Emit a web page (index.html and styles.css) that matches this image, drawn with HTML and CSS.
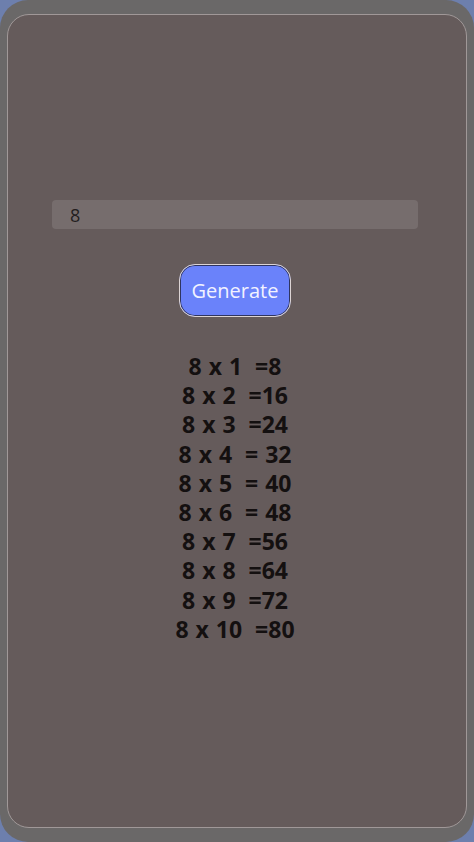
FILE: index.html
```html
<!DOCTYPE html>
<html lang="en">
<head>
  <meta charset="UTF-8">
  <meta name="viewport" content="width=device-width, initial-scale=1.0">
  <title>Multiplication Table</title>
  <link rel="stylesheet" href="styles.css">
</head>
<body>

  <div class="frame">
    <div class="panel">
      <input id="number" class="number-input" type="text" value="8" />
      <button class="generate" onclick="generateTable()">Generate</button>
      <div id="table" class="table">
        <div class="row">8 x 1 <span class="eq">=8</span></div>
        <div class="row">8 x 2 <span class="eq">=16</span></div>
        <div class="row">8 x 3 <span class="eq">=24</span></div>
        <div class="row">8 x 4 <span class="eq">= 32</span></div>
        <div class="row">8 x 5 <span class="eq">= 40</span></div>
        <div class="row">8 x 6 <span class="eq">= 48</span></div>
        <div class="row">8 x 7 <span class="eq">=56</span></div>
        <div class="row">8 x 8 <span class="eq">=64</span></div>
        <div class="row">8 x 9 <span class="eq">=72</span></div>
        <div class="row">8 x 10 <span class="eq">=80</span></div>
      </div>
    </div>
  </div>

  <script>
    function generateTable() {
      let n = parseInt(document.getElementById('number').value);
      if (isNaN(n)) return;
      let html = '';
      for (let i = 1; i <= 10; i++) {
        html += '<div class="row">' + n + ' x ' + i + ' <span class="eq">=' + (n * i) + '</span></div>';
      }
      document.getElementById('table').innerHTML = html;
    }
  </script>
</body>
</html>
```

FILE: styles.css
```css
body {
  font-family: 'Open Sans', sans-serif;
  margin: 0;
  height: 100vh;
  background-color: #6d7fad; /* Blue-gray behind the frame */
}

.frame {
  background-color: #6a6868; /* Gray device frame */
  border-radius: 28px;
  height: 842px;
  padding: 14px 7px;
  box-sizing: border-box;
}

.panel {
  background-color: #655b5b;
  border: 1px solid #a09898;
  border-radius: 22px;
  height: 100%;
  box-sizing: border-box;
  padding: 185px 48px 0 44px;
  display: flex;
  flex-direction: column;
  align-items: center;
}

.number-input {
  width: 100%;
  height: 29px;
  box-sizing: border-box;
  background-color: #766d6d;
  border: none;
  border-radius: 4px;
  color: #231e1e;
  font-family: 'Open Sans', sans-serif;
  font-size: 18px;
  padding: 0 0 0 18px;
  outline: none;
}

.generate {
  margin-top: 35px;
  width: 112px;
  height: 53px;
  background-color: #6a82fa;
  color: #f2f2ff;
  border: 1px solid #dcd4d4;
  box-shadow: inset 0 0 0 1px #2f3560;
  border-radius: 16px;
  font-family: 'Open Sans', sans-serif;
  font-size: 20px;
  cursor: pointer;
}

.table {
  margin-top: 35px;
  text-align: center;
  font-size: 23px;
  font-weight: bold;
  line-height: 29.2px;
  color: #141010;
  word-spacing: 1px;
}

.eq {
  margin-left: 6px; /* wider gap before the equals sign */
}
```
